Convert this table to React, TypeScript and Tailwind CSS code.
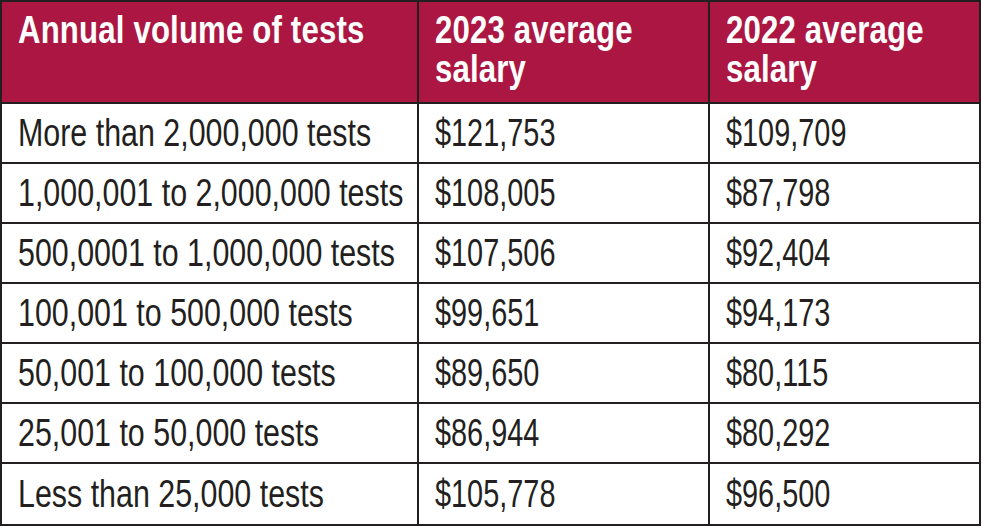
import React from "react";

const rows: [string, string, string][] = [
  ["More than 2,000,000 tests", "$121,753", "$109,709"],
  ["1,000,001 to 2,000,000 tests", "$108,005", "$87,798"],
  ["500,0001 to 1,000,000 tests", "$107,506", "$92,404"],
  ["100,001 to 500,000 tests", "$99,651", "$94,173"],
  ["50,001 to 100,000 tests", "$89,650", "$80,115"],
  ["25,001 to 50,000 tests", "$86,944", "$80,292"],
  ["Less than 25,000 tests", "$105,778", "$96,500"],
];

function Narrow({ children, tight }: { children: React.ReactNode; tight?: boolean }) {
  return (
    <span
      className={`inline-block whitespace-nowrap origin-left ${
        tight ? "scale-x-[0.76]" : "scale-x-[0.8]"
      }`}
    >
      {children}
    </span>
  );
}

function HeadText({ children }: { children: React.ReactNode }) {
  return (
    <span className="inline-block whitespace-nowrap origin-left scale-x-[0.82] tracking-[0.2px]">
      {children}
    </span>
  );
}

export default function App() {
  return (
    <div
      className="w-[982px] h-[527px] bg-white"
      style={{ fontFamily: '"Liberation Sans", Arial, sans-serif' }}
    >
      <div className="w-[981px] border-2 border-[#231f20] grid grid-cols-[417px_291px_269px] overflow-hidden">
        {["Annual volume of tests", "2023 average", "2022 average"].map((h, i) => (
          <div
            key={h}
            className={`h-[102px] bg-[#ab1642] text-white font-bold text-[38px] leading-[39px] pl-4 pt-[9px] border-b-2 border-[#231f20] overflow-hidden ${
              i < 2 ? "border-r-2" : ""
            }`}
          >
            <div>
              <HeadText>{h}</HeadText>
            </div>
            {i > 0 && (
              <div>
                <HeadText>salary</HeadText>
              </div>
            )}
          </div>
        ))}
        {rows.map((r, ri) =>
          r.map((c, ci) => (
            <div
              key={`${ri}-${ci}`}
              className={`h-[60px] flex items-center pl-4 text-[38px] leading-[39px] text-[#231f20] border-[#231f20] overflow-hidden ${
                ri < rows.length - 1 ? "border-b-2" : ""
              } ${ci < 2 ? "border-r-2" : ""}`}
            >
              <Narrow tight={ci > 0}>{c}</Narrow>
            </div>
          ))
        )}
      </div>
    </div>
  );
}
